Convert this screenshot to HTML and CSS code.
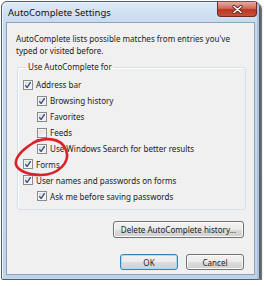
FILE: index.html
```html
<!DOCTYPE html>
<html>
<head>
<meta charset="UTF-8">
<title>AutoComplete Settings</title>
<link rel="stylesheet" href="styles.css">
</head>
<body>
	<div class="window">
		<div class="titlebar">
			<span class="title">AutoComplete Settings</span>
			<span class="close">
				<svg width="11" height="9" viewBox="0 0 11 9">
					<path d="M2 1.5 L9 7.5 M9 1.5 L2 7.5" stroke="#5a2418" stroke-width="3.2" stroke-linecap="round"/>
					<path d="M2 1.5 L9 7.5 M9 1.5 L2 7.5" stroke="#ffffff" stroke-width="1.6" stroke-linecap="round"/>
				</svg>
			</span>
		</div>
		<div class="client">
			<p class="intro">AutoComplete lists possible matches from entries you've<br>typed or visited before.</p>
			<fieldset class="group">
				<legend>Use AutoComplete for</legend>
				<div class="opt"><span class="box checked"></span>Address bar</div>
				<div class="opt sub"><span class="box checked"></span>Browsing history</div>
				<div class="opt sub"><span class="box checked"></span>Favorites</div>
				<div class="opt sub"><span class="box"></span>Feeds</div>
				<div class="opt sub"><span class="box checked"></span>Use Windows Search for better results</div>
				<div class="opt"><span class="box checked"></span>Forms</div>
				<div class="opt"><span class="box checked"></span>User names and passwords on forms</div>
				<div class="opt sub"><span class="box checked"></span>Ask me before saving passwords</div>
			</fieldset>
			<div class="actions">
				<button class="btn wide">Delete AutoComplete history...</button>
			</div>
			<div class="actions bottom">
				<button class="btn default">OK</button>
				<button class="btn">Cancel</button>
			</div>
		</div>
	</div>
	<svg class="mark" width="264" height="286" viewBox="0 0 264 286">
		<path d="M33 143 C44 137 61 137 66 150 C71 163 57 175 41 175 C26 175 14 169 16 161 C18 153 26 147 38 140" fill="none" stroke="#d8232a" stroke-width="2.6" stroke-linecap="round"/>
	</svg>
</body>
</html>
```
FILE: styles.css
```css
body {
	margin: 0;
	background: #ffffff;
	font-family: "Segoe UI", "Noto Sans", sans-serif;
	color: #1c1c1c;
}

.window {
	box-sizing: border-box;
	width: 259px;
	height: 279px;
	margin: 1px 0 0 1px;
	padding: 0 4px 4px 4px;
	display: flex;
	flex-direction: column;
	border: 1px solid #4f5d6d;
	border-radius: 6px 6px 2px 2px;
	background: linear-gradient(#dde9f6, #c6d9ee 22px, #bfd3ea);
	box-shadow: 2px 2px 1px rgba(0, 0, 0, 0.6), inset 1px 1px 0 #eef4fb, inset -2px 0 0 #a9c4e3;
}

.titlebar {
	height: 20px;
	display: flex;
	align-items: flex-start;
	justify-content: space-between;
}

.title {
	margin: 5px 0 0 2px;
	font-size: 9.5px;
	line-height: 12px;
	color: #111111;
}

.close {
	width: 40px;
	height: 15px;
	margin-right: -2px;
	display: flex;
	align-items: center;
	justify-content: center;
	border: 1px solid #6d2a20;
	border-top: none;
	border-radius: 0 0 4px 4px;
	background: linear-gradient(#e9a99c, #d46a58 45%, #bb3522 55%, #c8513a);
	box-sizing: border-box;
}

.client {
	flex: 1;
	border: 1px solid #8ea2b9;
	background: #f0f0f0;
	display: flex;
	flex-direction: column;
}

.intro {
	margin: 0;
	padding: 10px 0 0 9px;
	font-size: 8.05px;
	line-height: 12px;
}

.group {
	margin: 4px 8px 0 10px;
	padding: 4px 0 5px 5px;
	border: 1px solid #d5dfe5;
	border-radius: 3px;
	box-shadow: inset 1px 1px 0 #ffffff;
}

.group legend {
	margin-left: 3px;
	padding: 0 2px;
	font-size: 8.05px;
	line-height: 12px;
}

.opt {
	height: 15.9px;
	display: flex;
	align-items: center;
	font-size: 8.05px;
}

.opt.sub {
	padding-left: 14px;
}

.box {
	width: 10px;
	height: 10px;
	margin-right: 3px;
	box-sizing: border-box;
	border: 1px solid #8a8a8a;
	background: linear-gradient(135deg, #d6d9dc, #f8f8f8);
	box-shadow: inset 0 0 0 1px #f4f4f4;
}

.box.checked {
	background: url("data:image/svg+xml,%3Csvg xmlns='http://www.w3.org/2000/svg' width='8' height='8' viewBox='0 0 8 8'%3E%3Cpath d='M1.3 4.2 L3.1 6.6 L6.8 0.9' fill='none' stroke='%233b5286' stroke-width='1.4'/%3E%3C/svg%3E") center / 8px 8px no-repeat, linear-gradient(135deg, #d6d9dc, #f8f8f8);
}

.actions {
	display: flex;
	justify-content: flex-end;
	gap: 8px;
	margin: 11px 10px 0 0;
}

.actions.bottom {
	margin-top: 16px;
}

.btn {
	height: 16px;
	width: 58px;
	padding: 0;
	font-family: "Segoe UI", "Noto Sans", sans-serif;
	font-size: 8.05px;
	color: #1c1c1c;
	border: 1px solid #707070;
	border-radius: 3px;
	background: linear-gradient(#f2f2f2, #ebebeb 50%, #dddddd 50%, #cfcfcf);
	box-shadow: inset 0 0 0 1px #fbfbfb;
}

.btn.wide {
	width: 131px;
	height: 17px;
}

.btn.default {
	border-color: #3c7fb1;
	box-shadow: inset 0 0 0 1px #a6def7;
}

.mark {
	position: absolute;
	left: 0;
	top: 0;
	pointer-events: none;
}
```
